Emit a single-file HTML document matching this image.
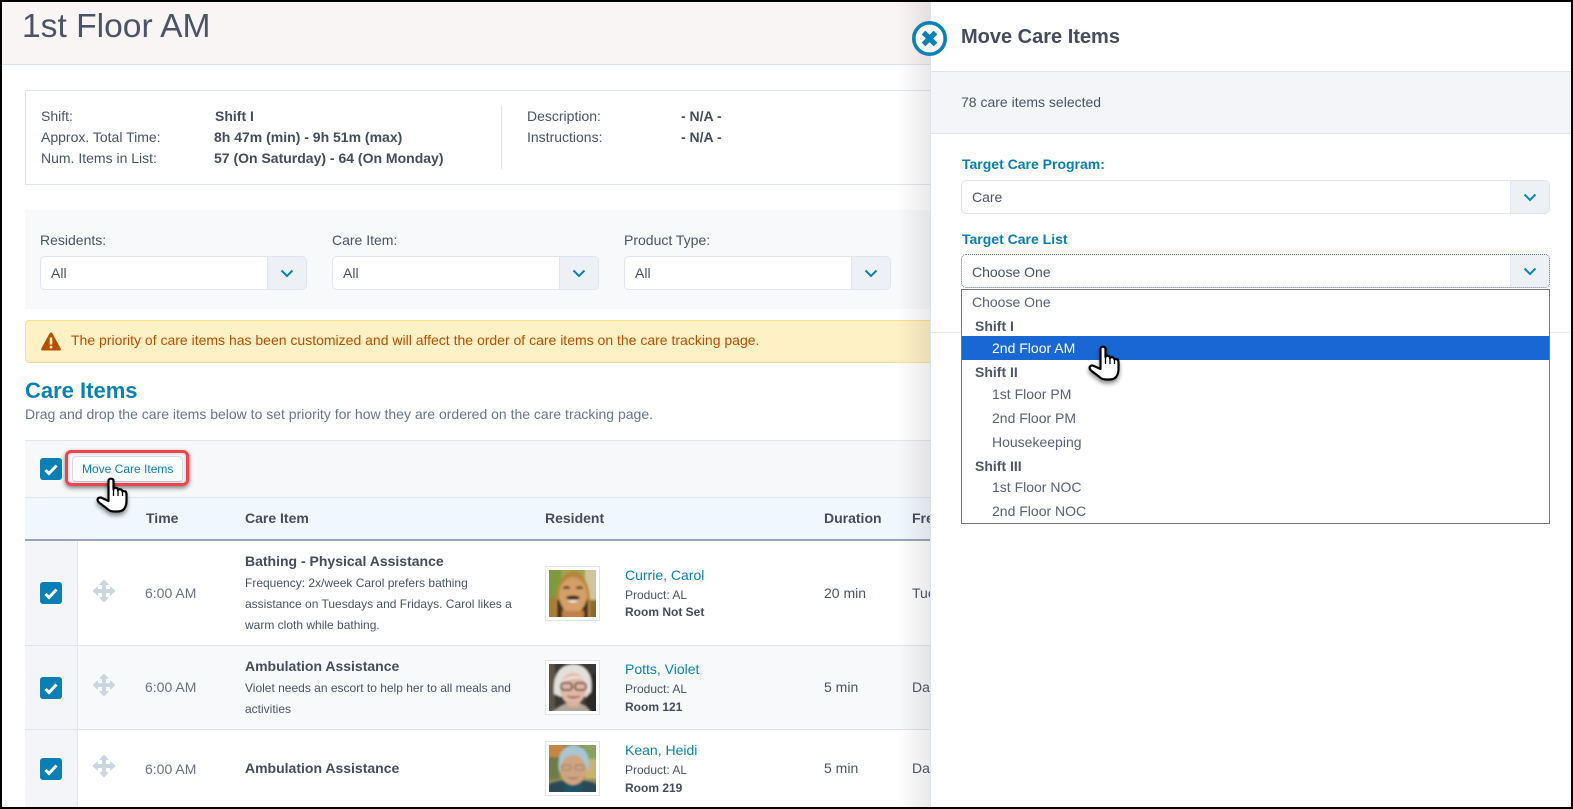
<!DOCTYPE html>
<html><head><meta charset="utf-8"><style>
html,body{margin:0;padding:0;width:1573px;height:809px;overflow:hidden;background:#fff}
body{position:relative;font-family:"Liberation Sans",sans-serif;color:#4b5368;font-size:14px}
.a{position:absolute;box-sizing:border-box}
.t{position:absolute;white-space:nowrap;line-height:20px;height:20px}
.b{font-weight:700;color:#454c60}
.l{color:#0a82b8}
.s{font-size:12px}
.sel{position:absolute;box-sizing:border-box;background:#fff;border:1px solid #dfe4ed;border-radius:5px;height:34px}
.sel i{position:absolute;right:0;top:0;bottom:0;width:38px;background:#edf0f4;border-left:1px solid #dfe4ed;border-radius:0 4px 4px 0}
.sel svg{position:absolute;right:12px;top:12px}
.sel span{position:absolute;left:10px;top:6px;line-height:20px}
.cb{position:absolute;width:22px;height:22px;left:40px;background:#0a7fb5;border-radius:3px}
.cb svg{position:absolute;left:4px;top:5px}
.mv{position:absolute;left:93px}
.fr{position:absolute;left:545px;width:55px;height:55px;background:#fff;border:1px solid #dfe4ed;box-sizing:border-box;padding:3px}
.fr svg{display:block}
.o{position:absolute;left:0;right:0;height:24px;line-height:24px;white-space:nowrap;color:#5a6178;padding-left:30px}
.g{font-weight:700;padding-left:13px;color:#4f566c}
</style></head><body>
<svg width="0" height="0" style="position:absolute"><defs>
<filter id="bl" x="-10%" y="-10%" width="120%" height="120%"><feGaussianBlur stdDeviation="1"/></filter>
<path id="ck" d="M1.500 7 L5 10.500 L12.500 2.500" fill="none" stroke="#fff" stroke-width="3"/>
<path id="ch" d="M1.500 1.500 L7 7 L12.500 1.500" fill="none" stroke="#0a82b8" stroke-width="2"/>
<path id="mvp" d="M11 0 L15 4.500 H12.500 V9.500 H17.500 V7 L22 11 L17.500 15 V12.500 H12.500 V17.500 H15 L11 22 L7 17.500 H9.500 V12.500 H4.500 V15 L0 11 L4.500 7 V9.500 H9.500 V4.500 H7 Z" fill="#ccd5e2" stroke="#ccd5e2" stroke-linejoin="round"/>
<g id="hand"><path d="M12.500 21 V3 Q12.500 .7 15 .7 Q17.500 .7 17.500 3 V11 Q18 9.500 20 9.800 Q22 10 22 12 Q22.500 11 24.500 11.300 Q26 11.500 26.500 13.500 Q27 12.800 28.700 13.200 Q30.500 13.800 30.500 16 V23 Q30.500 28 28 31 Q26 33.500 21 33.500 H18 Q14 33.500 11.500 31 L3 24.500 Q.8 22.500 2 20.500 Q3.500 18.800 6 20 L12.500 23 Z" fill="#fff" stroke="#000" stroke-width="2.200" stroke-linejoin="round"/><path d="M17.500 11 V18 M22 12 V18 M26.500 13.500 V18" stroke="#000" stroke-width="1.300" fill="none"/></g>
</defs></svg>

<!-- Header -->
<div class="a" style="left:0;top:0;width:935px;height:65px;background:#f9f5f4;border-bottom:1px solid #dde3ec"></div>
<div class="t" style="left:22px;top:7px;font-size:33.6px;line-height:40px;height:40px;color:#4b5368">1st Floor AM</div>

<!-- Info box -->
<div class="a" style="left:25px;top:90px;width:920px;height:95px;border:1px solid #dfe5ee"></div>
<div class="a" style="left:501px;top:106px;width:1px;height:63px;background:#dfe5ee"></div>
<div class="t" style="left:41px;top:106px">Shift:</div>
<div class="t" style="left:41px;top:127px">Approx. Total Time:</div>
<div class="t" style="left:41px;top:148px">Num. Items in List:</div>
<div class="t b" style="left:215px;top:106px">Shift I</div>
<div class="t b" style="left:214px;top:127px">8h 47m (min) - 9h 51m (max)</div>
<div class="t b" style="left:214px;top:148px">57 (On Saturday) - 64 (On Monday)</div>
<div class="t" style="left:527px;top:106px">Description:</div>
<div class="t" style="left:527px;top:127px">Instructions:</div>
<div class="t b" style="left:681px;top:106px">- N/A -</div>
<div class="t b" style="left:681px;top:127px">- N/A -</div>

<!-- Filters -->
<div class="a" style="left:25px;top:210px;width:915px;height:99px;background:#f8f9fb"></div>
<div class="t" style="left:40px;top:230px">Residents:</div>
<div class="t" style="left:332px;top:230px">Care Item:</div>
<div class="t" style="left:624px;top:230px">Product Type:</div>
<div class="sel" style="left:40px;top:256px;width:267px"><i></i><svg width="14" height="9"><use href="#ch"/></svg><span>All</span></div>
<div class="sel" style="left:332px;top:256px;width:267px"><i></i><svg width="14" height="9"><use href="#ch"/></svg><span>All</span></div>
<div class="sel" style="left:624px;top:256px;width:267px"><i></i><svg width="14" height="9"><use href="#ch"/></svg><span>All</span></div>

<!-- Alert -->
<div class="a" style="left:25px;top:320px;width:920px;height:43px;background:#fef1c5;border:1px solid #fcdf85;border-radius:4px"></div>
<svg class="a" style="left:41px;top:332px" width="20" height="19"><path d="M10 0.500 Q11 0.500 11.500 1.500 L19.700 16.500 Q20.300 18.500 18.500 18.500 H1.500 Q-.3 18.500 .3 16.500 L8.500 1.500 Q9 .5 10 .5Z" fill="#b84e00"/><rect x="8.700" y="5.500" width="2.600" height="7" fill="#fef1c5"/><rect x="8.700" y="13.800" width="2.600" height="2.600" fill="#fef1c5"/></svg>
<div class="t" style="left:71px;top:330px;color:#b84e00">The priority of care items has been customized and will affect the order of care items on the care tracking page.</div>

<!-- Care Items heading -->
<div class="t" style="left:25px;top:378px;height:26px;line-height:26px;font-size:22px;font-weight:700;color:#0a82b8">Care Items</div>
<div class="t" style="left:25px;top:404px;color:#6b7490">Drag and drop the care items below to set priority for how they are ordered on the care tracking page.</div>

<!-- Toolbar -->
<div class="a" style="left:25px;top:440px;width:915px;height:58px;background:#f7f8fa;border-top:1px solid #e0e4ec;border-bottom:1px solid #e0e4ec"></div>
<div class="cb" style="top:458px"><svg width="14" height="13"><use href="#ck"/></svg></div>
<div class="a" style="left:65px;top:450px;width:124px;height:36px;border:3px solid #f0444a;border-radius:6px;box-shadow:0 2px 5px rgba(0,0,0,.5),inset 0 0 3px rgba(0,0,0,.25)"></div>
<div class="a" style="left:72px;top:456px;width:111px;height:26px;background:#fbfcfd;border:1px solid #d4dae5;border-bottom-color:#bcc4d3;border-radius:4px"></div>
<div class="t s l" style="left:82px;top:459px">Move Care Items</div>

<!-- Table header -->
<div class="a" style="left:25px;top:498px;width:915px;height:43px;background:#f0f8fe;border-bottom:2px solid #97a3bb"></div>
<div class="t b" style="left:146px;top:508px">Time</div>
<div class="t b" style="left:245px;top:508px">Care Item</div>
<div class="t b" style="left:545px;top:508px">Resident</div>
<div class="t b" style="left:824px;top:508px">Duration</div>
<div class="t b" style="left:912px;top:508px">Frequency</div>

<!-- Rows -->
<div class="a" style="left:25px;top:645px;width:915px;height:85px;background:#f8f9fb;border-top:1px solid #dfe3ec;border-bottom:1px solid #dfe3ec"></div>
<div class="a" style="left:25px;top:541px;width:53px;height:267px;background:#f4f5f9;border-right:1px solid #dfe3ec"></div>
<div class="a" style="left:25px;top:645px;width:53px;height:1px;background:#dfe3ec"></div>
<div class="a" style="left:25px;top:729px;width:53px;height:1px;background:#dfe3ec"></div>

<div class="cb" style="top:582px"><svg width="14" height="13"><use href="#ck"/></svg></div>
<div class="cb" style="top:677px"><svg width="14" height="13"><use href="#ck"/></svg></div>
<div class="cb" style="top:758px"><svg width="14" height="13"><use href="#ck"/></svg></div>
<svg class="mv" style="top:580px" width="22" height="22"><use href="#mvp"/></svg>
<svg class="mv" style="top:674px" width="22" height="22"><use href="#mvp"/></svg>
<svg class="mv" style="top:755px" width="22" height="22"><use href="#mvp"/></svg>

<div class="t" style="left:145px;top:583px;color:#6b7280">6:00 AM</div>
<div class="t" style="left:145px;top:677px;color:#6b7280">6:00 AM</div>
<div class="t" style="left:145px;top:759px;color:#6b7280">6:00 AM</div>

<div class="t b" style="left:245px;top:551px">Bathing - Physical Assistance</div>
<div class="t s" style="left:245px;top:573px">Frequency: 2x/week Carol prefers bathing</div>
<div class="t s" style="left:245px;top:594px">assistance on Tuesdays and Fridays. Carol likes a</div>
<div class="t s" style="left:245px;top:615px">warm cloth while bathing.</div>
<div class="t b" style="left:245px;top:656px">Ambulation Assistance</div>
<div class="t s" style="left:245px;top:678px">Violet needs an escort to help her to all meals and</div>
<div class="t s" style="left:245px;top:699px">activities</div>
<div class="t b" style="left:245px;top:758px">Ambulation Assistance</div>

<!-- Faces -->
<div class="fr" style="top:566px"><svg width="47" height="47" viewBox="0 0 47 47"><rect width="47" height="47" fill="#a3a155"/><g filter="url(#bl)"><rect x="-2" y="-2" width="14" height="30" fill="#7f9a3c"/><rect x="36" y="-2" width="13" height="32" fill="#d0c5a0"/><rect x="-2" y="28" width="14" height="21" fill="#a87e2e"/><rect x="36" y="30" width="13" height="19" fill="#8a6a2a"/><path d="M6 49 Q4 6 24 1 Q44 4 41 49Z" fill="#b5853a"/><path d="M8 49 V30 L14 30 V49Z M33 30 H39 V49 H33Z" fill="#43331c"/><ellipse cx="24" cy="25" rx="14" ry="18" fill="#d59f68"/><path d="M11 16 Q22 3 38 16 Q30 8 24 9 Q16 8 11 16" fill="#c8963f"/><path d="M14 17 q4 -2 7 0 v2 h-7z M27 17 q4 -2 7 0 v2 h-7z" fill="#6a4426"/><path d="M17 27 Q24 24 31 27 L29 30 H19Z" fill="#3c2116"/><path d="M18 30 Q24 35 30 30Z" fill="#f6ecde"/><rect x="13" y="41" width="22" height="7" fill="#c08048"/></g></svg></div>
<div class="fr" style="top:660px"><svg width="47" height="47" viewBox="0 0 47 47"><rect width="47" height="47" fill="#3a3835"/><g filter="url(#bl)"><rect x="-2" y="-2" width="8" height="51" fill="#5d5246"/><rect x="37" y="10" width="12" height="39" fill="#2c2b27"/><path d="M2 49 Q14 38 24 38 Q36 38 42 49Z" fill="#b0a598"/><path d="M5 30 Q3 1 24 0 Q45 1 42 28 L37 33 H11Z" fill="#e3e0db"/><ellipse cx="24" cy="25" rx="13" ry="16" fill="#e0b8a4"/><path d="M11 19 Q24 6 38 17 Q28 11 11 19" fill="#ebe8e3"/><rect x="12" y="19" width="11" height="7" rx="3" fill="none" stroke="#5a443a" stroke-width="1.800"/><rect x="26" y="19" width="11" height="7" rx="3" fill="none" stroke="#5a443a" stroke-width="1.800"/><path d="M18 32 Q24 36 31 32 Q24 34 18 32" fill="#a04e50" stroke="#a04e50"/><rect x="19" y="38" width="11" height="5" fill="#dbb09b"/></g></svg></div>
<div class="fr" style="top:741px"><svg width="47" height="47" viewBox="0 0 47 47"><rect width="47" height="47" fill="#8d8a54"/><g filter="url(#bl)"><rect x="-2" y="-2" width="16" height="14" fill="#c98545"/><rect x="34" y="-2" width="15" height="16" fill="#86a460"/><rect x="-2" y="12" width="12" height="22" fill="#6f7a4a"/><rect x="36" y="14" width="13" height="20" fill="#c6b372"/><path d="M-2 49 V40 Q10 34 24 36 Q38 34 49 40 V49Z" fill="#2c4a58"/><path d="M10 27 Q7 2 24 0 Q42 2 40 25 L36 22 Q24 10 14 22Z" fill="#a9c6d2"/><ellipse cx="24" cy="25" rx="13" ry="15" fill="#cfa581"/><rect x="13" y="20" width="9" height="5" rx="2" fill="none" stroke="#8a7a68" stroke-width="1"/><rect x="26" y="20" width="9" height="5" rx="2" fill="none" stroke="#8a7a68" stroke-width="1"/><path d="M17 31 Q24 35 31 31 Q24 37 17 31" fill="#7a3f35"/><path d="M15 49 V39 Q24 43 33 39 V49Z" fill="#1f5568"/></g></svg></div>

<div class="t l" style="left:625px;top:565px">Currie, Carol</div>
<div class="t s" style="left:625px;top:585px">Product: AL</div>
<div class="t s b" style="left:625px;top:602px">Room Not Set</div>
<div class="t l" style="left:625px;top:659px">Potts, Violet</div>
<div class="t s" style="left:625px;top:679px">Product: AL</div>
<div class="t s b" style="left:625px;top:697px">Room 121</div>
<div class="t l" style="left:625px;top:740px">Kean, Heidi</div>
<div class="t s" style="left:625px;top:760px">Product: AL</div>
<div class="t s b" style="left:625px;top:778px">Room 219</div>

<div class="t" style="left:824px;top:583px">20 min</div>
<div class="t" style="left:824px;top:677px">5 min</div>
<div class="t" style="left:824px;top:758px">5 min</div>
<div class="t" style="left:912px;top:583px">Tuesday</div>
<div class="t" style="left:912px;top:677px">Daily</div>
<div class="t" style="left:912px;top:758px">Daily</div>

<!-- Panel shadow -->
<div class="a" style="left:898px;top:0;width:33px;height:809px;background:linear-gradient(to right,rgba(60,50,50,0),rgba(60,50,50,.11))"></div>

<!-- Panel -->
<div class="a" style="left:930px;top:0;width:643px;height:809px;background:#fff;border-left:1px solid #dde3ec"></div>
<div class="a" style="left:931px;top:71px;width:642px;height:63px;background:#f3f5f9;border-top:1px solid #dfe3ec;border-bottom:1px solid #dfe3ec"></div>
<svg class="a" style="left:909px;top:18px" width="41" height="41"><circle cx="20.500" cy="20.500" r="15.700" fill="#fff" stroke="#0a82b8" stroke-width="3.600"/><path d="M14.500 14.500 L26.500 26.500 M26.500 14.500 L14.500 26.500" stroke="#0a82b8" stroke-width="5.200"/></svg>
<div class="t" style="left:961px;top:27px;font-size:20px;font-weight:700;color:#454c60">Move Care Items</div>
<div class="t" style="left:961px;top:92px">78 care items selected</div>
<div class="t" style="left:962px;top:154px;font-weight:700;color:#0a7fb5">Target Care Program:</div>
<div class="sel" style="left:961px;top:180px;width:589px"><i></i><svg width="14" height="9"><use href="#ch"/></svg><span>Care</span></div>
<div class="t" style="left:962px;top:229px;font-weight:700;color:#0a7fb5">Target Care List</div>
<div class="sel" style="left:961px;top:254px;width:589px;border:1px dotted #5f6f95"><i style="border-left:1px solid #dfe4ed"></i><svg width="14" height="9"><use href="#ch"/></svg><span style="top:7px">Choose One</span></div>
<div class="a" style="left:931px;top:332px;width:642px;height:1px;background:#e4e8ef"></div>

<!-- Dropdown -->
<div class="a" style="left:961px;top:289px;width:589px;height:235px;background:#fff;border:1px solid #767676">
<div class="o" style="top:0;padding-left:10px">Choose One</div>
<div class="o g" style="top:24px">Shift I</div>
<div class="o" style="top:46px;background:#1967d2;color:#fff">2nd Floor AM</div>
<div class="o g" style="top:70px">Shift II</div>
<div class="o" style="top:92px">1st Floor PM</div>
<div class="o" style="top:116px">2nd Floor PM</div>
<div class="o" style="top:140px">Housekeeping</div>
<div class="o g" style="top:164px">Shift III</div>
<div class="o" style="top:185px">1st Floor NOC</div>
<div class="o" style="top:209px">2nd Floor NOC</div>
</div>

<!-- Cursors -->
<svg class="a" style="left:96px;top:478px;filter:drop-shadow(0 3px 2px rgba(0,0,0,.45));overflow:visible" width="32" height="34"><use href="#hand"/></svg>
<svg class="a" style="left:1088px;top:346px;filter:drop-shadow(0 3px 2px rgba(0,0,0,.45));overflow:visible" width="32" height="34"><use href="#hand"/></svg>

<!-- Outer frame -->
<div class="a" style="left:0;top:0;width:1573px;height:809px;border:2px solid #000;pointer-events:none"></div>
</body></html>
